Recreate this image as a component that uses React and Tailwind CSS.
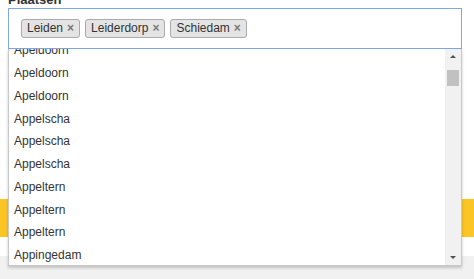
import React from 'react';

const tags = ['Leiden', 'Leiderdorp', 'Schiedam'];

const places = [
  'Apeldoorn',
  'Apeldoorn',
  'Apeldoorn',
  'Appelscha',
  'Appelscha',
  'Appelscha',
  'Appeltern',
  'Appeltern',
  'Appeltern',
  'Appingedam',
  'Appingedam',
];

const Tag = ({ label }) => (
  <span className="flex h-[19px] items-center gap-[4px] rounded-[3px] border border-[#aaaaaa] bg-[#e4e4e4] pl-[5px] pr-[5px] text-[12px] leading-none text-[#333]">
    {label}
    <span className="text-[12px] font-bold text-[#777]">×</span>
  </span>
);

const App = () => {
  return (
    <div className="relative min-h-[279px] overflow-hidden bg-white font-['Liberation_Sans',Arial,sans-serif] text-[#333]">
      <label className="-mt-[8px] mb-px block px-2 text-[13px] font-bold leading-[15px] text-[#333]">
        Plaatsen
      </label>

      <div className="ml-2 flex h-[41px] w-[454px] items-center gap-[5px] border border-[#7fa6e6] bg-white pl-[12px] pb-px">
        {tags.map((t) => (
          <Tag key={t} label={t} />
        ))}
      </div>

      <div className="h-[150px] bg-white" />
      <div className="h-[38px] bg-[#fbc526]" />
      <div className="h-[19px] bg-white" />
      <div className="h-[30px] bg-[#f1f1f1]" />

      {/* open dropdown */}
      <div className="absolute left-2 top-[49px] flex h-[217px] w-[454px] border-x border-b border-[#c8c8c8] bg-white shadow-[0_2px_3px_rgba(0,0,0,0.2)]">
        <div className="flex-1 overflow-hidden">
          <ul className="-mt-[10px]">
            {places.map((p, i) => (
              <li key={i} className="flex h-[22.75px] items-center px-[5px] text-[12px] text-[#333]">
                {p}
              </li>
            ))}
          </ul>
        </div>
        <div className="flex w-[16px] flex-col items-center bg-[#f1f1f1]">
          <div className="mt-[6px] h-0 w-0 border-x-[3px] border-b-[3px] border-x-transparent border-b-[#505050]" />
          <div className="mt-[12px] h-[16px] w-[12px] bg-[#c1c1c1]" />
          <div className="flex-1" />
          <div className="mb-[6px] h-0 w-0 border-x-[3px] border-t-[3px] border-x-transparent border-t-[#505050]" />
        </div>
      </div>
    </div>
  );
};

export default App;
